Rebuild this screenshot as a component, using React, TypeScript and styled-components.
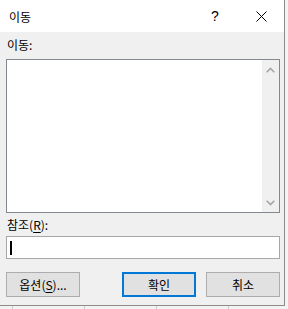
import React from "react";
import styled, { createGlobalStyle } from "styled-components";

const GlobalStyle = createGlobalStyle`
  html, body {
    margin: 0;
    padding: 0;
  }
  body {
    width: 288px;
    height: 309px;
    overflow: hidden;
    font-family: "Noto Sans CJK KR", "Noto Sans", sans-serif;
    font-size: 12px;
    color: #000;
    background-color: #f3f3f3;
    background-image: repeating-linear-gradient(
      to right,
      #c9c9c9 0,
      #c9c9c9 1px,
      transparent 1px,
      transparent 72px
    );
    background-position: 12px 0;
  }
`;

const Dialog = styled.div`
  width: 285px;
  height: 306px;
  background: #f0f0f0;
  border-right: 1px solid #8c8c8c;
  border-bottom: 1px solid #8c8c8c;
  box-sizing: border-box;
  display: flex;
  flex-direction: column;
`;

const TitleBar = styled.div`
  height: 32px;
  flex-shrink: 0;
  background: #fff;
  display: flex;
  align-items: center;
`;

const Title = styled.div`
  flex: 1;
  padding-left: 9px;
  font-size: 12px;
`;

const TitleButton = styled.div`
  width: 46px;
  height: 32px;
  display: flex;
  align-items: center;
  justify-content: center;
  font-family: "Liberation Sans", sans-serif;
  font-size: 14px;
`;

const Body = styled.div`
  padding: 4px 4px 0 6px;
  display: flex;
  flex-direction: column;
`;

const Label = styled.div<{ $gap: number }>`
  height: 18px;
  line-height: 18px;
  padding-left: 1px;
  margin-bottom: ${(p) => p.$gap}px;
`;

const Key = styled.span`
  text-decoration: underline;
  text-underline-offset: 2px;
`;

const ListBox = styled.div`
  height: 154px;
  box-sizing: border-box;
  border: 1px solid #828790;
  background: #fff;
  display: flex;
  justify-content: flex-end;
  margin-bottom: 3px;
`;

const ScrollBar = styled.div`
  width: 17px;
  background: #f0f0f0;
  display: flex;
  flex-direction: column;
  justify-content: space-between;
  align-items: center;
  padding: 7px 0 6px;
`;

const RefInput = styled.div`
  height: 23px;
  border: 1px solid #a7a7a7;
  background: #fff;
  box-sizing: border-box;
  display: flex;
  align-items: center;
  padding-left: 3px;
`;

const Caret = styled.div`
  width: 2px;
  height: 14px;
  background: #000;
`;

const ButtonRow = styled.div`
  display: flex;
  margin-top: 13px;
`;

const Button = styled.div<{ $primary?: boolean; $offset?: number }>`
  width: 74px;
  height: 25px;
  box-sizing: border-box;
  background: #e1e1e1;
  border: ${(p) => (p.$primary ? "2px solid #0078d7" : "1px solid #adadad")};
  display: flex;
  align-items: center;
  justify-content: center;
  margin-left: ${(p) => p.$offset ?? 0}px;
`;

function Chevron({ up }: { up?: boolean }) {
  return (
    <svg width="9" height="6" viewBox="0 0 9 6">
      <path
        d={up ? "M0.7 5.2 L4.5 1.4 L8.3 5.2" : "M0.7 0.8 L4.5 4.6 L8.3 0.8"}
        fill="none"
        stroke="#a6a6a6"
        strokeWidth="1.6"
      />
    </svg>
  );
}

export default function App() {
  return (
    <>
      <GlobalStyle />
      <Dialog>
        <TitleBar>
          <Title>이동</Title>
          <TitleButton>?</TitleButton>
          <TitleButton>
            <svg width="11" height="11" viewBox="0 0 11 11">
              <path d="M0.5 0.5 L10.5 10.5 M10.5 0.5 L0.5 10.5" stroke="#000" strokeWidth="1" />
            </svg>
          </TitleButton>
        </TitleBar>
        <Body>
          <Label $gap={5}>이동:</Label>
          <ListBox>
            <ScrollBar>
              <Chevron up />
              <Chevron />
            </ScrollBar>
          </ListBox>
          <Label $gap={2}>
            참조(<Key>R</Key>):
          </Label>
          <RefInput>
            <Caret />
          </RefInput>
          <ButtonRow>
            <Button>
              옵션(<Key>S</Key>)...
            </Button>
            <Button $primary $offset={42}>
              확인
            </Button>
            <Button $offset={10}>취소</Button>
          </ButtonRow>
        </Body>
      </Dialog>
    </>
  );
}
